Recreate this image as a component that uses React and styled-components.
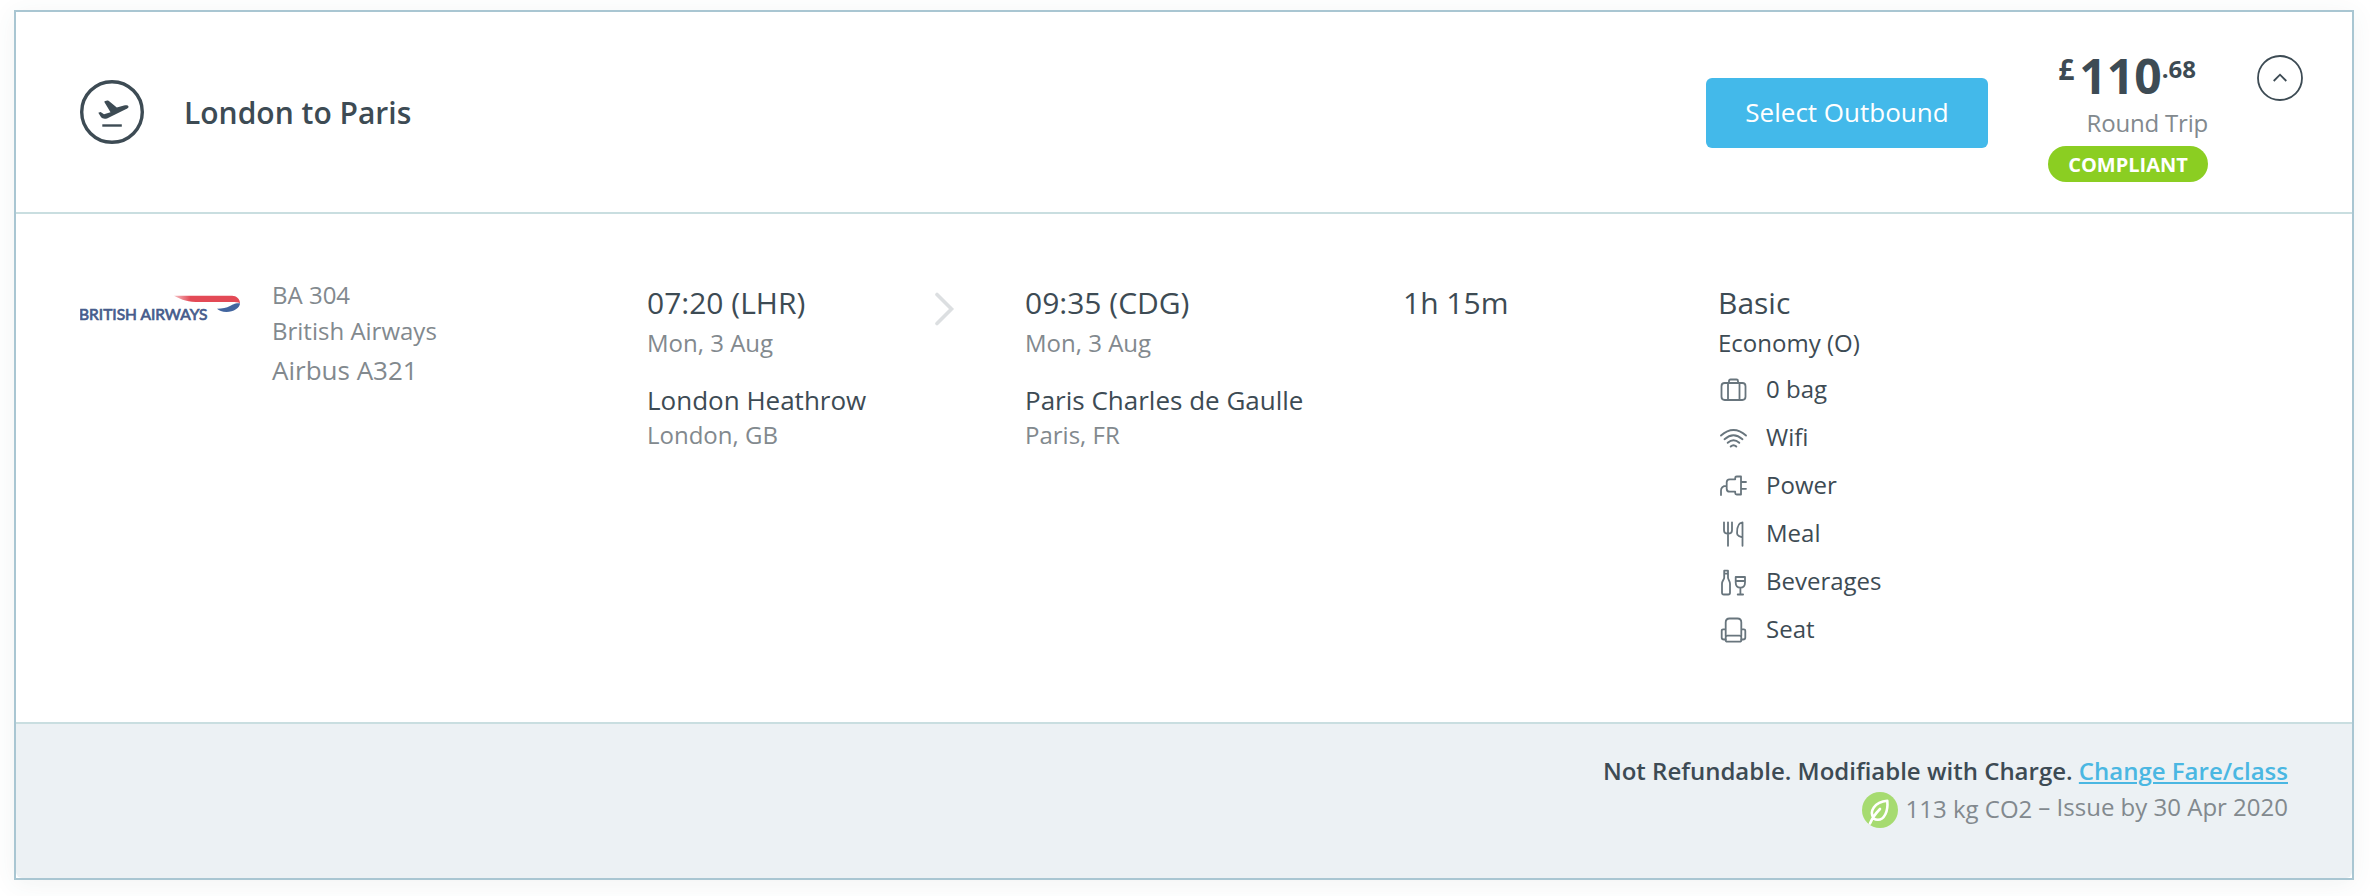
import React from 'react';
import styled, { createGlobalStyle } from 'styled-components';

const ink = '#3d4b54';
const muted = '#82898e';
const line = '#a9c6d2';
const divider = '#c9dee0';

const GlobalStyle = createGlobalStyle`
  *, *::before, *::after { box-sizing: border-box; }
  html { background: #fff; }
  body { margin: 0; font-family: 'Open Sans', sans-serif; color: ${ink}; font-size: 24px; }
  h2, p { margin: 0; }
`;

const Page = styled.main`
  height: 896px;
  padding: 10px 16px 16px 14px;
  overflow: hidden;
`;

const Card = styled.article`
  display: flex;
  flex-direction: column;
  height: 870px;
  border: 2px solid ${line};
  background: #fff;
  box-shadow: 0 4px 24px rgba(60, 90, 80, 0.07);
`;

const Header = styled.header`
  display: flex;
  align-items: flex-start;
  height: 202px;
  padding: 0 49px 0 64px;
  border-bottom: 2px solid ${divider};
`;

const RouteIcon = styled.svg`
  width: 64px;
  height: 64px;
  margin-top: 68px;
`;

const Title = styled.h2`
  flex: 1;
  margin: 81px 0 0 40px;
  font-size: 30px;
  font-weight: 600;
  line-height: 40px;
`;

const SelectButton = styled.button`
  width: 282px;
  height: 70px;
  margin-top: 66px;
  padding: 0 0 3px;
  border: 0;
  border-radius: 6px;
  background: #43b9ea;
  color: #fff;
  font: 400 26px/36px 'Open Sans', sans-serif;
`;

const PriceBlock = styled.div`
  display: flex;
  flex-direction: column;
  align-items: flex-end;
  width: 160px;
  margin: 36px 49px 0 60px;
`;

const Price = styled.div`
  display: flex;
  align-items: flex-start;
  height: 56px;
  margin-right: 12px;
  font-weight: 700;
`;

const Currency = styled.span`
  margin: 5px 5px 0 0;
  font-size: 28px;
  line-height: 32px;
`;

const Whole = styled.span`
  font-size: 48px;
  line-height: 55px;
`;

const Cents = styled.span`
  margin-top: 5px;
  font-size: 24px;
  line-height: 32px;
`;

const TripType = styled.span`
  height: 42px;
  color: ${muted};
  line-height: 37px;
  letter-spacing: -0.2px;
`;

const Badge = styled.span`
  width: 160px;
  height: 36px;
  border-radius: 18px;
  background: #8bce22;
  color: #fff;
  font-size: 20px;
  font-weight: 700;
  line-height: 37px;
  text-align: center;
`;

const CollapseButton = styled.button`
  width: 46px;
  height: 46px;
  margin-top: 43px;
  padding: 0;
  border: 0;
  background: none;
  svg { display: block; }
`;

const Segment = styled.section`
  display: grid;
  grid-template-columns: 192px 375px 288px 90px 378px 315px 1fr;
  flex: 1;
  padding: 68px 0 0 64px;
`;

const Logo = styled.svg`
  width: 162px;
  height: 34px;
  margin-top: 10px;
`;

const Line = styled.p`
  font-size: ${({ $size }) => $size || 24}px;
  line-height: ${({ $height }) => $height || 36}px;
  color: ${({ $muted }) => ($muted ? muted : ink)};
  margin-top: ${({ $gap }) => $gap || 0}px;
  white-space: nowrap;
`;

const Chevron = styled.svg`
  width: 22px;
  height: 38px;
  margin-top: 7px;
`;

const Amenities = styled.ul`
  margin: 4px 0 0;
  padding: 0;
  list-style: none;
`;

const Amenity = styled.li`
  display: flex;
  align-items: center;
  gap: 16px;
  height: 48px;
  line-height: 36px;
  svg { width: 32px; height: 32px; margin-top: 2px; }
`;

const Footer = styled.footer`
  display: flex;
  flex-direction: column;
  align-items: flex-end;
  height: 156px;
  padding: 29px 64px 0 0;
  border-top: 2px solid ${divider};
  border-radius: 0 0 6px 6px;
  background: #ecf1f4;
`;

const Terms = styled.p`
  font-weight: 600;
  line-height: 36px;
`;

const FareLink = styled.a`
  color: #4ab7e2;
  text-decoration: underline;
  text-decoration-thickness: 2px;
  text-underline-offset: 2px;
`;

const Emissions = styled.p`
  display: flex;
  align-items: flex-start;
  color: ${muted};
  line-height: 36px;
`;

const LeafIcon = styled.svg`
  width: 36px;
  height: 36px;
  margin: 3px 8px 0 0;
`;

const Carbon = styled.span`
  margin: 2px 6px 0 0;
`;

const strokeProps = {
  viewBox: '0 0 32 32',
  fill: 'none',
  stroke: '#68757d',
  strokeWidth: 1.8,
  strokeLinecap: 'round',
  strokeLinejoin: 'round',
};

const BagIcon = () => (
  <svg {...strokeProps}>
    <rect x="3.5" y="9" width="24" height="17" rx="3.2" />
    <path d="M11 9V7c0-.9.6-1.500 1.500-1.500h6c.9 0 1.500.6 1.500 1.500v2M10 9v17M21.500 9v17" />
  </svg>
);

const WifiIcon = () => (
  <svg {...strokeProps} strokeWidth="1.9">
    <path d="M3 13.500Q15.500 2.500 28 13.500M6.500 17.200Q15.500 9.200 24.500 17.200M9.700 20.800Q15.500 15.600 21.300 20.800M12.700 24.500Q15.500 21.800 18.300 24.500" />
  </svg>
);

const PowerIcon = () => (
  <svg {...strokeProps}>
    <path d="M3 25v-4.500c0-3 1.600-4.700 5.700-4.700M23 6.500h-4.300c-.9 0-1.500.6-1.500 1.500v1.300h-5.500c-1.800 0-3 1.200-3 3v6.400c0 1.800 1.200 3 3 3h5.500V23c0 .9.6 1.500 1.500 1.500H23zM23.500 12H28M23.500 18.800H28" />
  </svg>
);

const MealIcon = () => (
  <svg {...strokeProps}>
    <path d="M6 4.300v8c0 2.400 1 3.400 4 3.400s4-1 4-3.400v-8M10 4.300v23.500M24.500 27.800V4.300c-3.600.3-5.400 4.600-5.400 10v1.300c0 1.200.5 1.700 1.500 2.200l3.900 1.700" />
  </svg>
);

const DrinksIcon = () => (
  <svg {...strokeProps}>
    <path d="M6.200 4.700h3.800v6.800c0 2.200 2 3.200 2 6.300v9c0 1-.6 1.700-1.700 1.700H5.700c-1.100 0-1.700-.7-1.700-1.700v-9c0-3.100 2.200-4.100 2.200-6.300zM6.200 7.700H10M17.700 11h9.300v5.500c0 3-1.600 5.200-4.600 5.200s-4.700-2.200-4.700-5.200zM17.700 15h9.300M22.400 22v6.300M19.700 28.500h5.400" />
  </svg>
);

const SeatIcon = () => (
  <svg {...strokeProps}>
    <path d="M7.700 22V8.300c0-2.300 1.500-3.800 3.800-3.800h8c2.300 0 3.800 1.500 3.800 3.800V22M7.500 15.300H5.100c-.9 0-1.400.5-1.400 1.400v6.800c0 1.400.8 2 2.300 2h1.700M23.500 15.300h2.400c.9 0 1.400.5 1.400 1.400v6.800c0 1.400-.8 2-2.300 2h-1.700" />
    <rect x="7.700" y="21.700" width="15.600" height="6" rx="1.800" />
  </svg>
);

const amenities = [
  ['0 bag', BagIcon],
  ['Wifi', WifiIcon],
  ['Power', PowerIcon],
  ['Meal', MealIcon],
  ['Beverages', DrinksIcon],
  ['Seat', SeatIcon],
];

const Stop = ({ time, date, airport, city }) => (
  <div>
    <Line $size={30} $height={42}>{time}</Line>
    <Line $muted $gap={1}>{date}</Line>
    <Line $size={26} $gap={21}>{airport}</Line>
    <Line $muted $height={34}>{city}</Line>
  </div>
);

export default function App() {
  return (
    <Page>
      <GlobalStyle />
      <Card>
        <Header>
          <RouteIcon viewBox="0 0 64 64">
            <circle cx="32" cy="32" r="30.300" fill="none" stroke={ink} strokeWidth="3.400" />
            <path
              fill={ink}
              d="M18.300 32.700l2.300-.7 3.400 2.200 6.500-2-6-9.900c-.4-.8 0-1.100.8-1.300l2-.4c.8-.1 1.300 0 1.900.6l7.600 6.200 7.200-1.900c2.400-.6 4.200-.2 4.500 1.100.2 1.300-1 2.100-2.800 2.700L27 38.400c-2.600.8-4.600.4-6.200-1.600z"
            />
            <path d="M22.300 45.500h19.500" stroke={ink} strokeWidth="2.400" />
          </RouteIcon>
          <Title>London to Paris</Title>
          <SelectButton>Select Outbound</SelectButton>
          <PriceBlock>
            <Price>
              <Currency>£</Currency>
              <Whole>110</Whole>
              <Cents>.68</Cents>
            </Price>
            <TripType>Round Trip</TripType>
            <Badge>COMPLIANT</Badge>
          </PriceBlock>
          <CollapseButton aria-label="Collapse">
            <svg width="46" height="46" viewBox="0 0 46 46" fill="none" stroke={ink} strokeWidth="1.800">
              <circle cx="23" cy="23" r="22" />
              <path d="M16.700 26l6.300-6.300 6.300 6.300" />
            </svg>
          </CollapseButton>
        </Header>

        <Segment>
          <Logo viewBox="0 0 162 34">
            <defs>
              <linearGradient id="ribbon" x1="0" x2="1" y1="0" y2="0">
                <stop offset="0" stopColor="#e34a56" stopOpacity="0.35" />
                <stop offset="0.250" stopColor="#e34a56" />
              </linearGradient>
            </defs>
            <text x="-1" y="27.700" fill="#465c8c" stroke="#465c8c" strokeWidth="0.700" fontFamily="Lato, sans-serif" fontSize="15.500" textLength="128.500" lengthAdjust="spacingAndGlyphs">BRITISH AIRWAYS</text>
            <path fill="url(#ribbon)" d="M94 3.700h58c4.500 0 8 3.200 8 7.500-2-1-5-1.200-8-1.200h-32c-12 0-18-2-26-6.300z" />
            <path fill="#42659f" d="M160 11.200c.2 4.300-6.500 8.800-13.500 8.800-4.500 0-7.500-1.300-9.500-3.200 5.500-.2 9.500-1 13-2.800 3.200-1.600 4.500-3.200 10-2.800z" />
          </Logo>
          <div>
            <Line $muted $height={26}>BA 304</Line>
            <Line $muted $height={45}>British Airways</Line>
            <Line $muted $size={26} $height={34}>Airbus A321</Line>
          </div>
          <Stop time="07:20 (LHR)" date="Mon, 3 Aug" airport="London Heathrow" city="London, GB" />
          <Chevron viewBox="0 0 22 38" fill="none" stroke="#dcdfe1" strokeWidth="3.600" strokeLinecap="round">
            <path d="M2 5.500l14.500 14.500L2 34.500" />
          </Chevron>
          <Stop time="09:35 (CDG)" date="Mon, 3 Aug" airport="Paris Charles de Gaulle" city="Paris, FR" />
          <Line $size={30} $height={42}>1h 15m</Line>
          <div>
            <Line $size={30} $height={42}>Basic</Line>
            <Line $gap={1}>Economy (O)</Line>
            <Amenities>
              {amenities.map(([label, Icon]) => (
                <Amenity key={label}>
                  <Icon />
                  {label}
                </Amenity>
              ))}
            </Amenities>
          </div>
        </Segment>

        <Footer>
          <Terms>
            Not Refundable. Modifiable with Charge. <FareLink>Change Fare/class</FareLink>
          </Terms>
          <Emissions>
            <LeafIcon viewBox="0 0 36 36">
              <circle cx="18" cy="18" r="18" fill="#a6db70" />
              <path
                d="M8 31.500c2.500-6 6-10.500 10-14.500M11.800 26.500c-5-7 .5-16.500 13.500-17.700 1 10.500-3 19-9.500 19-1.500 0-3-.4-4-1.300"
                fill="none" stroke="#fff" strokeWidth="2.600" strokeLinecap="round" strokeLinejoin="round"
              />
            </LeafIcon>
            <Carbon>113 kg CO2</Carbon>
            <span>– Issue by 30 Apr 2020</span>
          </Emissions>
        </Footer>
      </Card>
    </Page>
  );
}
